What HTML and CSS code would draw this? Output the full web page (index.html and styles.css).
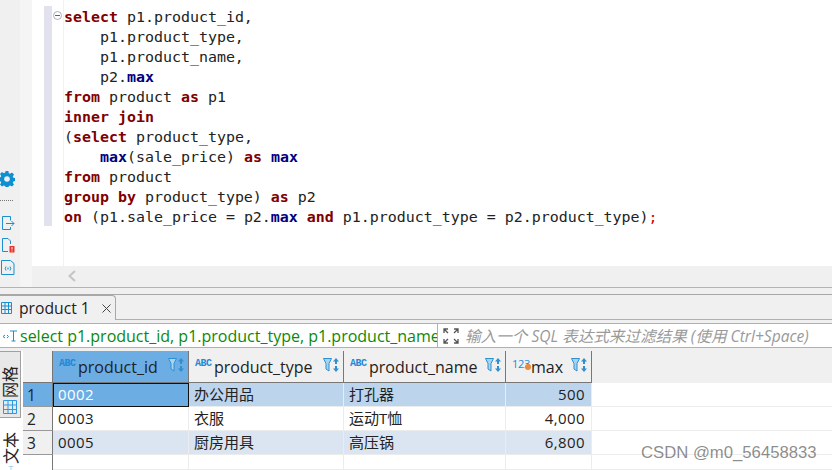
FILE: index.html
```html
<!DOCTYPE html>
<html lang="zh">
<head>
    <meta charset="UTF-8">
    <title>product 1</title>
    <link rel="stylesheet" href="styles.css">
</head>
<body>
    <div class="top">
        <div class="side-tools">
            <svg class="gear" width="16" height="16" viewBox="0 0 16 16"><path fill="#0e8fd0" d="M6.600 0h2.800l.4 2.200 1.300.6 1.900-1.200 2 2-1.200 1.900.6 1.300 2.100.4v2.800l-2.100.4-.6 1.300 1.200 1.900-2 2-1.900-1.200-1.300.6-.4 2.200H6.600l-.4-2.200-1.300-.6-1.900 1.200-2-2 1.200-1.900-.6-1.300L-.5 9.400V6.600l2.100-.4.6-1.300L1 3l2-2 1.900 1.200 1.300-.6zM8 5.200A2.800 2.800 0 1 0 8 10.800 2.800 2.800 0 0 0 8 5.200z"/></svg>
            <div class="dots"></div>
            <svg width="14" height="15" viewBox="0 0 14 15" fill="none" stroke="#1b8fd0"><path d="M9.500 4.500V.5h-8v13h8V11M5 7.500h8M10.500 5l2.500 2.500-2.500 2.500"/></svg>
            <svg width="14" height="15" viewBox="0 0 14 15" fill="none"><path stroke="#1b8fd0" d="M7 13.500H1.500V.5h5.500l2.500 2.500V6"/><rect x="8.500" y="8" width="5" height="6.500" fill="#e8322a"/><path stroke="#fff" d="M11 9v2.500M11 12.500v1"/></svg>
            <svg width="14" height="15" viewBox="0 0 14 15" fill="none" stroke="#1b8fd0"><path d="M.5.500h9l3.500 3v11H.5z"/><path d="M5 6.500q-1.500 2 0 4M9 6.500q1.500 2 0 4"/><circle cx="7" cy="8.500" r="1" fill="#5aa7d8" stroke="none"/></svg>
        </div>
        <div class="gutter"></div>
        <div class="editor-wrap">
            <div class="editor">
                <div class="ruler"></div>
                <div class="fold"><span class="fold-mark"></span></div>
                <pre class="code"><b>select</b> p1.product_id,
    p1.product_type,
    p1.product_name,
    p2.<i>max</i>
<b>from</b> product <b>as</b> p1
<b>inner join</b>
(<b>select</b> product_type,
    <i>max</i>(sale_price) <b>as</b> <i>max</i>
<b>from</b> product
<b>group by</b> product_type) <b>as</b> p2
<b>on</b> (p1.sale_price = p2.<i>max</i> <b>and</b> p1.product_type = p2.product_type)<em>;</em></pre>
            </div>
            <div class="hscroll">
                <svg width="10" height="12" viewBox="0 0 10 12" fill="none" stroke="#c4c4c4" stroke-width="2"><path d="M8 1L2.500 6 8 11"/></svg>
            </div>
        </div>
    </div>

    <div class="tabs">
        <div class="tab">
            <svg width="11" height="12" viewBox="0 0 11 12" fill="none" stroke="#1b8fd0"><path d="M.5.500h10v11H.5zM.5 4h10M.5 7.500h10M4 .5v11M7.500.500v11"/></svg>
            <span>product 1</span>
            <svg class="tab-x" width="9" height="9" viewBox="0 0 9 9" stroke="#444" fill="none"><path d="M.5.500l8 8M8.500.500l-8 8"/></svg>
        </div>
    </div>

    <div class="filter">
        <div class="query">
            <span class="query-icon">
                <svg width="16" height="12" viewBox="0 0 16 12" fill="none" stroke="#1b8fd0"><path d="M3 5L1 6.500 3 8M5 5l1.500 1.500L5 8M8 1h7M11.500 1v10M9.500 11h4"/></svg>
            </span>
            <span class="query-text">select p1.product_id, p1.product_type, p1.product_name</span>
        </div>
        <div class="expand">
            <svg width="16" height="16" viewBox="0 0 16 16" fill="none" stroke="#555" stroke-width="1.300"><path d="M1 5V1h4M1 1l4 4M11 1h4v4M15 1l-4 4M1 11v4h4M1 15l4-4M15 11v4h-4M15 15l-4-4"/></svg>
        </div>
        <div class="filter-hint">输入一个 SQL 表达式来过滤结果 (使用 Ctrl+Space)</div>
    </div>

    <div class="results">
        <div class="views">
            <div class="view view-on">
                <span class="view-label">网格</span>
                <svg width="14" height="14" viewBox="0 0 14 14" fill="none" stroke="#2c9ae0"><path d="M.5.500h13v13H.5zM.5 5h13M.5 9.500h13M5 .5v13M9.500.500v13"/></svg>
            </div>
            <div class="view view-off">
                <span class="view-label">文本</span>
                <svg width="14" height="10" viewBox="0 0 14 10" fill="none" stroke="#2c9ae0"><path d="M1 1h12M7 1v9"/></svg>
            </div>
        </div>
        <div class="grid">
            <div class="hcell corner"></div>
            <div class="hcell hcell-on"><span class="type type-lock">ABC</span><span class="hname">product_id</span><svg class="sort" width="17" height="14" viewBox="0 0 17 14"><use href="#sort"/></svg></div>
            <div class="hcell"><span class="type">ABC</span><span class="hname">product_type</span><svg class="sort" width="17" height="14" viewBox="0 0 17 14"><use href="#sort"/></svg></div>
            <div class="hcell"><span class="type">ABC</span><span class="hname">product_name</span><svg class="sort" width="17" height="14" viewBox="0 0 17 14"><use href="#sort"/></svg></div>
            <div class="hcell"><span class="type type-num">123<span class="dot"></span></span><span class="hname">max</span><svg class="sort" width="17" height="14" viewBox="0 0 17 14"><use href="#sort"/></svg></div>
            <div class="rest"></div>

            <div class="rownum rownum-on">1</div>
            <div class="cell cell-on digits">0002</div>
            <div class="cell odd">办公用品</div>
            <div class="cell odd">打孔器</div>
            <div class="cell odd num digits">500</div>
            <div class="rest"></div>

            <div class="rownum">2</div>
            <div class="cell digits">0003</div>
            <div class="cell">衣服</div>
            <div class="cell">运动T恤</div>
            <div class="cell num digits">4,000</div>
            <div class="rest"></div>

            <div class="rownum">3</div>
            <div class="cell alt digits">0005</div>
            <div class="cell alt">厨房用具</div>
            <div class="cell alt">高压锅</div>
            <div class="cell alt num digits">6,800</div>
            <div class="rest"></div>

            <div class="rownum empty"></div>
            <div class="cell"></div>
            <div class="cell"></div>
            <div class="cell"></div>
            <div class="cell"></div>
            <div class="rest"></div>
        </div>
    </div>

    <svg class="defs" width="0" height="0">
        <symbol id="sort" viewBox="0 0 17 14">
            <path d="M.5.500h8L6 5.500V13l-3-2V5.500z" fill="#a5d3f0" stroke="#2f8fd0"/>
            <path d="M13 0l3 3.500h-2V6h-2V3.500h-2zM13 14l3-3.500h-2V8h-2v2.500h-2z" fill="#2f8fd0"/>
        </symbol>
    </svg>

    <div class="watermark">CSDN @m0_56458833</div>
</body>
</html>
```

FILE: styles.css
```css
* {
    margin: 0;
    padding: 0;
    box-sizing: border-box;
}

html, body {
    width: 832px;
    height: 470px;
    overflow: hidden;
}

body {
    background-color: #f0f0f0;
    font-family: "Open Sans", "Noto Sans CJK SC", sans-serif;
    position: relative;
    display: flex;
    flex-direction: column;
}

.defs {
    position: absolute;
}

/* editor */
.top {
    display: flex;
    height: 287px;
    flex-shrink: 0;
}

.side-tools {
    width: 20px;
    display: flex;
    flex-direction: column;
    align-items: flex-start;
    padding-top: 171px;
    background-color: #f0f0f0;
}

.gear {
    margin: 0 0 13px -1px;
}

.dots {
    width: 13px;
    border-top: 1px dotted #777;
    margin-bottom: 15px;
}

.side-tools svg:not(.gear) {
    margin: 0 0 7px 1px;
}

.gutter {
    width: 12px;
    background-color: #f5f5f5;
}

.editor-wrap {
    flex: 1;
    display: flex;
    flex-direction: column;
}

.editor {
    height: 266px;
    background-color: #fff;
    display: flex;
    padding-left: 12px;
}

.ruler {
    width: 8px;
    height: 220px;
    margin-top: 6px;
    background-color: #e2e2ee;
}

.fold {
    width: 12px;
    border-right: 1px solid #f2f2f2;
    padding-top: 11px;
    padding-left: 1px;
}

.fold-mark {
    display: block;
    width: 9px;
    height: 9px;
    border: 1px solid #a8b0bc;
    border-radius: 50%;
    background: linear-gradient(#5a6470, #5a6470) center / 5px 1px no-repeat;
}

.code {
    font-family: "DejaVu Sans Mono", monospace;
    font-size: 14.950px;
    line-height: 20px;
    color: #222;
    padding: 7px 0 0 0;
}

.code b {
    color: #7f0000;
    font-weight: bold;
}

.code i {
    color: #000080;
    font-style: normal;
    font-weight: bold;
}

.code em {
    color: #d00000;
    font-style: normal;
}

.hscroll {
    height: 21px;
    margin-left: 30px;
    background-color: #f0f0f0;
    padding: 4px 0 0 5px;
}

.hscroll svg {
    display: block;
}

/* tabs */
.tabs {
    height: 33px;
    flex-shrink: 0;
    border-top: 1px solid #b4b4b4;
    padding-top: 7px;
    display: flex;
    border-bottom: 1px solid #b0b0b0;
    background: linear-gradient(#a8a8a8, #a8a8a8) 0 6px / 100% 1px no-repeat #f0f0f0;
}

.tab {
    width: 116px;
    height: 25px;
    margin-bottom: -1px;
    background-color: #f0f0f0;
    border: 1px solid #a8a8a8;
    border-left: none;
    border-bottom: none;
    border-radius: 0 4px 0 0;
    display: flex;
    align-items: center;
    padding-left: 1px;
    font-size: 15.700px;
    color: #222;
    gap: 7px;
}

.tab-x {
    margin-left: 5px;
}

/* filter line */
.filter {
    height: 25px;
    flex-shrink: 0;
    margin-top: 3px;
    background-color: #fff;
    border-top: 1px solid #b0b0b0;
    border-bottom: 1px solid #b0b0b0;
    display: flex;
    align-items: center;
}

.query {
    width: 438px;
    display: flex;
    align-items: center;
    height: 100%;
    border-right: 1px solid #b0b0b0;
    overflow: hidden;
}

.query-icon {
    width: 20px;
    flex-shrink: 0;
    display: flex;
    padding-left: 2px;
}

.query-text {
    white-space: nowrap;
    font-size: 16px;
    line-height: 22px;
    color: #0a8a0a;
}

.expand {
    width: 27px;
    display: flex;
    padding-left: 5px;
}

.filter-hint {
    font-size: 15.600px;
    font-style: italic;
    color: #9a9a9a;
    white-space: nowrap;
}

/* results */
.results {
    flex: 1;
    display: flex;
    padding-top: 3px;
    min-height: 0;
    background: linear-gradient(#f0f0f0, #f0f0f0) 0 0 / 100% 3px no-repeat #fff;
}

.views {
    width: 23px;
    flex-shrink: 0;
    background-color: #fff;
    overflow: hidden;
}

.view {
    width: 21px;
    display: flex;
    flex-direction: column;
    align-items: center;
    gap: 2px;
}

.view-on {
    height: 67px;
    justify-content: flex-end;
    padding-bottom: 3px;
    background-color: #e8e8e8;
    border: 1px solid #a0a0a0;
    border-left: none;
}

.view-off {
    height: 52px;
    padding-top: 14px;
    overflow: hidden;
}

.view-label {
    writing-mode: vertical-rl;
    text-orientation: sideways;
    transform: rotate(180deg);
    font-size: 16px;
    line-height: 18px;
    color: #222;
    flex-shrink: 0;
}

.grid {
    flex: 1;
    display: grid;
    grid-template-columns: 30px 136px 155px 162px 86px 1fr;
    grid-template-rows: 32px 24px 24px 24px 1fr;
    min-height: 0;
    overflow: hidden;
}

.hcell {
    background-color: #f0f0f0;
    border-right: 1px solid #777;
    border-bottom: 1px solid #777;
    display: flex;
    align-items: center;
    padding-left: 6px;
    font-size: 16px;
    color: #222;
    position: relative;
}

.hcell-on {
    background-color: #6cade4;
}

.type {
    font-family: "Liberation Mono", monospace;
    font-size: 10px;
    font-weight: bold;
    color: #1f88d8;
    width: 19px;
    flex-shrink: 0;
    margin-top: -7px;
    letter-spacing: -0.5px;
}

.type-num {
    font-family: "Open Sans", sans-serif;
    font-weight: normal;
    font-size: 11px;
    position: relative;
    letter-spacing: -0.3px;
}

.dot {
    position: absolute;
    right: 0;
    top: 8px;
    width: 6px;
    height: 6px;
    border-radius: 50%;
    background-color: #ea8a3a;
}

.hname {
    white-space: nowrap;
}

.sort {
    position: absolute;
    right: 3px;
    top: 7px;
}

.rest {
    background-color: #fff;
    border-bottom: 1px solid #ececec;
}

.rest:nth-child(6) {
    background-color: #f0f0f0;
    border-bottom: none;
}

.rownum {
    background-color: #f0f0f0;
    border-right: 1px solid #777;
    border-bottom: 1px solid #999;
    font-size: 15.500px;
    line-height: 24px;
    padding-left: 4px;
    color: #222;
}

.rownum-on {
    background-color: #6cade4;
}

.rownum.empty {
    background-color: #fff;
    border-bottom: none;
}

.cell {
    background-color: #fff;
    border-right: 1px solid #ececec;
    border-bottom: 1px solid #ececec;
    font-size: 15px;
    line-height: 23px;
    padding-left: 5px;
    color: #222;
    white-space: nowrap;
}

.digits {
    letter-spacing: 0.4px;
}

.odd {
    background-color: #bdd5ec;
}

.alt {
    background-color: #dbe5f1;
}

.cell-on {
    background-color: #6cade4;
    color: #fff;
    outline: 1px solid #111;
    outline-offset: -1px;
    border: none;
}

.num {
    text-align: right;
    padding-right: 6px;
}

.watermark {
    position: absolute;
    left: 641px;
    top: 443px;
    font-family: "Liberation Sans", sans-serif;
    font-size: 16.700px;
    color: rgba(90, 90, 90, 0.7);
    white-space: nowrap;
}
```
